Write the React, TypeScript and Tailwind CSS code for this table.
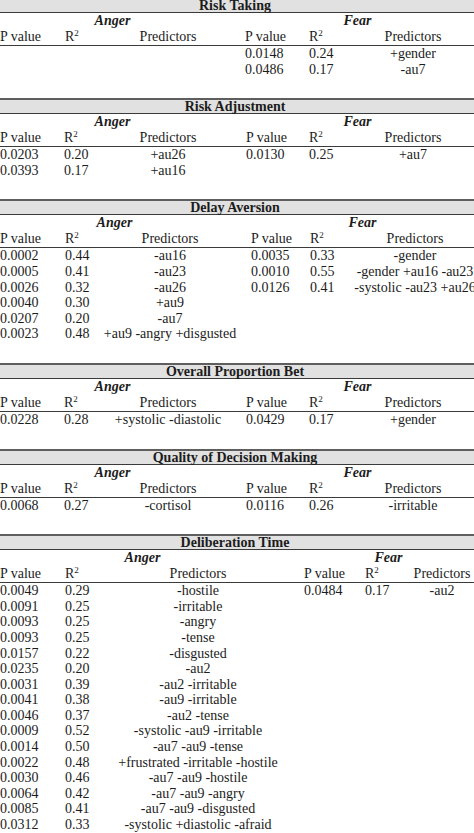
import React from "react";

type Row = [string, string, string];

type Cols = {
  block: string;
  pv: string;
  r2: string;
  pred: string;
  label: string;
};

type Layout = {
  anger: Cols;
  gap: string;
  fear: Cols;
};

type Section = {
  title: string;
  layout: Layout;
  anger: Row[];
  fear: Row[];
};

const std: Layout = {
  anger: { block: "w-[236px]", pv: "w-[64px]", r2: "w-[36px]", pred: "w-[136px]", label: "w-[225px]" },
  gap: "w-[10px]",
  fear: { block: "w-[235px]", pv: "w-[63px]", r2: "w-[36px]", pred: "w-[136px]", label: "w-[223px]" },
};

const riskTaking: Layout = {
  anger: { block: "w-[236px]", pv: "w-[65px]", r2: "w-[35px]", pred: "w-[136px]", label: "w-[225px]" },
  gap: "w-[9px]",
  fear: { block: "w-[236px]", pv: "w-[64px]", r2: "w-[36px]", pred: "w-[136px]", label: "w-[225px]" },
};

const delay: Layout = {
  anger: { block: "w-[240px]", pv: "w-[65px]", r2: "w-[35px]", pred: "w-[140px]", label: "w-[229px]" },
  gap: "w-[11px]",
  fear: { block: "w-[233px]", pv: "w-[59px]", r2: "w-[36px]", pred: "w-[138px]", label: "w-[223px]" },
};

const deliberation: Layout = {
  anger: { block: "w-[296px]", pv: "w-[65px]", r2: "w-[35px]", pred: "w-[196px]", label: "w-[285px]" },
  gap: "w-[8px]",
  fear: { block: "w-[179px]", pv: "w-[61px]", r2: "w-[36px]", pred: "w-[82px]", label: "w-[169px]" },
};

const sections: Section[] = [
  {
    title: "Risk Taking",
    layout: riskTaking,
    anger: [],
    fear: [
      ["0.0148", "0.24", "+gender"],
      ["0.0486", "0.17", "-au7"],
    ],
  },
  {
    title: "Risk Adjustment",
    layout: std,
    anger: [
      ["0.0203", "0.20", "+au26"],
      ["0.0393", "0.17", "+au16"],
    ],
    fear: [["0.0130", "0.25", "+au7"]],
  },
  {
    title: "Delay Aversion",
    layout: delay,
    anger: [
      ["0.0002", "0.44", "-au16"],
      ["0.0005", "0.41", "-au23"],
      ["0.0026", "0.32", "-au26"],
      ["0.0040", "0.30", "+au9"],
      ["0.0207", "0.20", "-au7"],
      ["0.0023", "0.48", "+au9 -angry +disgusted"],
    ],
    fear: [
      ["0.0035", "0.33", "-gender"],
      ["0.0010", "0.55", "-gender +au16 -au23"],
      ["0.0126", "0.41", "-systolic -au23 +au26"],
    ],
  },
  {
    title: "Overall Proportion Bet",
    layout: std,
    anger: [["0.0228", "0.28", "+systolic -diastolic"]],
    fear: [["0.0429", "0.17", "+gender"]],
  },
  {
    title: "Quality of Decision Making",
    layout: std,
    anger: [["0.0068", "0.27", "-cortisol"]],
    fear: [["0.0116", "0.26", "-irritable"]],
  },
  {
    title: "Deliberation Time",
    layout: deliberation,
    anger: [
      ["0.0049", "0.29", "-hostile"],
      ["0.0091", "0.25", "-irritable"],
      ["0.0093", "0.25", "-angry"],
      ["0.0093", "0.25", "-tense"],
      ["0.0157", "0.22", "-disgusted"],
      ["0.0235", "0.20", "-au2"],
      ["0.0031", "0.39", "-au2 -irritable"],
      ["0.0041", "0.38", "-au9 -irritable"],
      ["0.0046", "0.37", "-au2 -tense"],
      ["0.0009", "0.52", "-systolic -au9 -irritable"],
      ["0.0014", "0.50", "-au7 -au9 -tense"],
      ["0.0022", "0.48", "+frustrated -irritable -hostile"],
      ["0.0030", "0.46", "-au7 -au9 -hostile"],
      ["0.0064", "0.42", "-au7 -au9 -angry"],
      ["0.0085", "0.41", "-au7 -au9 -disgusted"],
      ["0.0312", "0.33", "-systolic +diastolic -afraid"],
    ],
    fear: [["0.0484", "0.17", "-au2"]],
  },
];

function R2() {
  return (
    <span>
      R<sup className="relative -top-[5px] text-[9px] align-baseline">2</sup>
    </span>
  );
}

function Cells({ cols, row }: { cols: Cols; row?: Row }) {
  return (
    <div className={`${cols.block} flex shrink-0`}>
      <div className={`${cols.pv} shrink-0`}>{row ? row[0] : ""}</div>
      <div className={`${cols.r2} shrink-0`}>{row ? row[1] : ""}</div>
      <div className={`${cols.pred} shrink-0 flex justify-center`}>{row ? row[2] : ""}</div>
    </div>
  );
}

function HeaderCells({ cols }: { cols: Cols }) {
  return (
    <div className={`${cols.block} flex shrink-0`}>
      <div className={`${cols.pv} shrink-0`}>P value</div>
      <div className={`${cols.r2} shrink-0`}>
        <R2 />
      </div>
      <div className={`${cols.pred} shrink-0 flex justify-center`}>Predictors</div>
    </div>
  );
}

function TableSection({ section }: { section: Section }) {
  const { layout } = section;
  const n = Math.max(section.anger.length, section.fear.length);
  const rows = Array.from({ length: n }, (_, i) => i);

  return (
    <div className="border-t-2 border-[#5e5e5e] pb-[21px]">
      <div className="h-[14px] bg-[#e1e1e1] border-b border-[#3a3a3a]">
        <div className="w-[470px] text-center font-bold leading-[13px]">{section.title}</div>
      </div>

      <div className="h-[16px] leading-[16px] flex font-bold italic">
        <div className={`${layout.anger.block} shrink-0`}>
          <div className={`${layout.anger.label} text-center`}>Anger</div>
        </div>
        <div className={`${layout.gap} shrink-0`} />
        <div className={`${layout.fear.block} shrink-0`}>
          <div className={`${layout.fear.label} text-center`}>Fear</div>
        </div>
      </div>

      <div className="h-[17px] leading-[16px] flex border-b border-[#3a3a3a]">
        <HeaderCells cols={layout.anger} />
        <div className={`${layout.gap} shrink-0`} />
        <HeaderCells cols={layout.fear} />
      </div>

      {rows.map((i) => (
        <div key={i} className="h-[15.6px] leading-[15.6px] flex">
          <Cells cols={layout.anger} row={section.anger[i]} />
          <div className={`${layout.gap} shrink-0`} />
          <Cells cols={layout.fear} row={section.fear[i]} />
        </div>
      ))}
    </div>
  );
}

export default function App() {
  return (
    <div
      className="w-[474px] h-[833px] overflow-hidden bg-white text-[14px] text-[#1c1c1c] whitespace-nowrap font-['Liberation_Serif',serif]"
      style={{ fontFamily: '"Liberation Serif", "Times New Roman", serif' }}
    >
      <div className="-mt-[3px]">
        {sections.map((s) => (
          <TableSection key={s.title} section={s} />
        ))}
      </div>
    </div>
  );
}
